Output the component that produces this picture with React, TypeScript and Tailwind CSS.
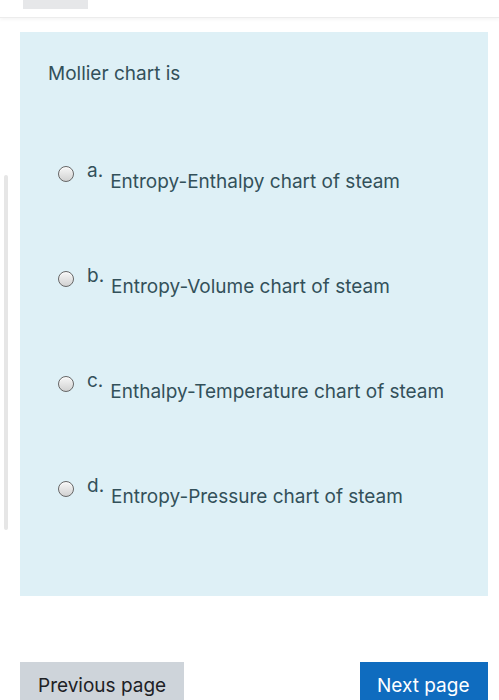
import React from 'react';

const options = [
  { letter: 'a.', text: 'Entropy-Enthalpy chart of steam' },
  { letter: 'b.', text: 'Entropy-Volume chart of steam' },
  { letter: 'c.', text: 'Enthalpy-Temperature chart of steam' },
  { letter: 'd.', text: 'Entropy-Pressure chart of steam' },
];

const font = { fontFamily: `Inter, 'Noto Sans', sans-serif` };

export default function App() {
  return (
    <div className="relative w-[499px] h-[700px] overflow-hidden bg-white" style={font}>
      {/* top bar */}
      <div className="h-[18px] border-b border-[#ececec] shadow-[0_2px_3px_rgba(0,0,0,0.04)]">
        <div className="ml-[23px] w-[65px] h-[9px] bg-[#e6e7e9]"></div>
      </div>

      {/* scroll indicator */}
      <div className="absolute left-[4px] top-[175px] w-[4px] h-[355px] bg-[#e6e6e6] rounded-sm"></div>

      {/* question card */}
      <div className="mt-[14px] ml-[20px] w-[468px] h-[564px] bg-[#def0f6] pl-[28px] pt-[30px] text-[#33505a]">
        <p className="text-[19px] leading-[24px]">Mollier chart is</p>

        <div className="mt-[84px] flex flex-col gap-[81px]">
          {options.map((opt, index) => (
            <div key={index} className="flex items-start h-[24px]">
              <span className="-mt-[4px] ml-[10px] w-[16px] h-[16px] rounded-full border border-[#666] bg-gradient-to-b from-[#f7f7f7] to-[#d2d2d2] shadow-[inset_0_1px_1px_rgba(255,255,255,0.8)] shrink-0"></span>
              <span className="ml-[13px] text-[19px] leading-[18px] -mt-[8px]">{opt.letter}</span>
              <span className="ml-[7px] text-[19px] leading-[24px]">{opt.text}</span>
            </div>
          ))}
        </div>
      </div>

      {/* navigation */}
      <div className="mt-[66px] ml-[20px] w-[468px] flex justify-between">
        <button className="w-[164px] h-[46px] bg-[#ced4da] text-[#1d2125] text-[19px] text-left pl-[18px] pt-[2px]">
          Previous page
        </button>
        <button className="w-[128px] h-[46px] bg-[#0f6cbf] text-white text-[19px] text-left pl-[17px] pt-[2px]">
          Next page
        </button>
      </div>
    </div>
  );
}
